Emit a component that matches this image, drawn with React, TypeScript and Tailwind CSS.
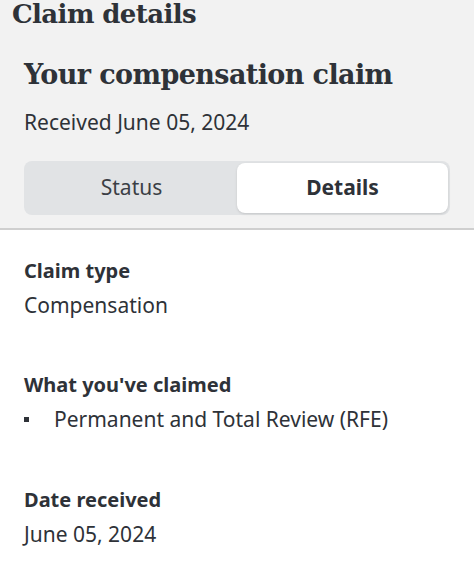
export default function App() {
  const serif = { fontFamily: '"DejaVu Serif", "Liberation Serif", serif' };
  const sans = { fontFamily: '"Noto Sans", "Open Sans", sans-serif' };

  return (
    <div className="w-[474px] h-[564px] overflow-hidden bg-white text-[#2e3238]" style={sans}>
      {/* Header */}
      <div className="bg-[#f2f2f2] border-b-2 border-[#cfcfcf] pb-[13px]">
        <h1 className="px-3 text-[26px] font-bold leading-none pt-[1px] tracking-[-0.6px]" style={serif}>
          Claim details
        </h1>
        <div className="px-6 pt-[31px]">
          <h2 className="text-[27px] font-bold leading-[34px] tracking-[-0.6px]" style={serif}>
            Your compensation claim
          </h2>
          <p className="mt-[16px] text-[21px] leading-[28px]">Received June 05, 2024</p>
          <div className="mt-[25px] flex h-[54px] rounded-[8px] bg-[#e1e3e5] p-[2px]">
            <button className="flex-1 text-[21px] text-[#3b3f45]">Status</button>
            <button className="flex-1 rounded-[8px] bg-white text-[21px] font-bold shadow-sm">Details</button>
          </div>
        </div>
      </div>

      {/* Body */}
      <div className="px-6 pt-[27px]">
        <section>
          <h3 className="text-[20px] font-bold leading-[28px]">Claim type</h3>
          <p className="mt-[6px] text-[21px] leading-[28px]">Compensation</p>
        </section>
        <section className="mt-[52px]">
          <h3 className="text-[20px] font-bold leading-[28px]">What you've claimed</h3>
          <ul className="mt-[6px]">
            <li className="flex items-center text-[21px] leading-[28px]">
              <span className="w-[5px] h-[5px] bg-[#2e3238] mr-[25px]" />
              Permanent and Total Review (RFE)
            </li>
          </ul>
        </section>
        <section className="mt-[53px]">
          <h3 className="text-[20px] font-bold leading-[28px]">Date received</h3>
          <p className="mt-[6px] text-[21px] leading-[28px]">June 05, 2024</p>
        </section>
      </div>
    </div>
  );
}
